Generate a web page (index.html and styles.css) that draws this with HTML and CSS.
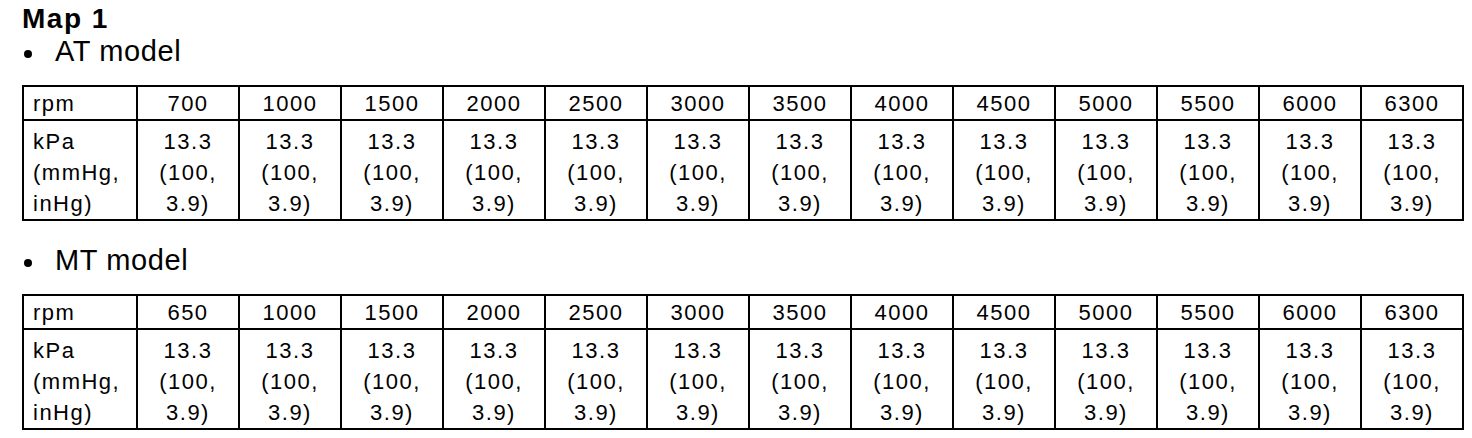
FILE: index.html
```html
<!DOCTYPE html>
<html lang="en">
<head>
    <meta charset="UTF-8">
    <title>Map 1</title>
    <link rel="stylesheet" href="styles.css">
</head>
<body>
    <div class="page">
        <h1 class="map-title">Map 1</h1>

        <p class="model">AT model</p>
        <table class="map-table">
            <colgroup>
                <col class="col-label">
                <col span="13" class="col-value">
            </colgroup>
            <tr class="row-rpm">
                <td class="label">rpm</td>
                <td>700</td><td>1000</td><td>1500</td><td>2000</td><td>2500</td><td>3000</td><td>3500</td>
                <td>4000</td><td>4500</td><td>5000</td><td>5500</td><td>6000</td><td>6300</td>
            </tr>
            <tr class="row-kpa">
                <td class="label">kPa<br>(mmHg,<br>inHg)</td>
                <td>13.3<br>(100,<br>3.9)</td><td>13.3<br>(100,<br>3.9)</td><td>13.3<br>(100,<br>3.9)</td>
                <td>13.3<br>(100,<br>3.9)</td><td>13.3<br>(100,<br>3.9)</td><td>13.3<br>(100,<br>3.9)</td>
                <td>13.3<br>(100,<br>3.9)</td><td>13.3<br>(100,<br>3.9)</td><td>13.3<br>(100,<br>3.9)</td>
                <td>13.3<br>(100,<br>3.9)</td><td>13.3<br>(100,<br>3.9)</td><td>13.3<br>(100,<br>3.9)</td>
                <td>13.3<br>(100,<br>3.9)</td>
            </tr>
        </table>

        <p class="model model-mt">MT model</p>
        <table class="map-table">
            <colgroup>
                <col class="col-label">
                <col span="13" class="col-value">
            </colgroup>
            <tr class="row-rpm">
                <td class="label">rpm</td>
                <td>650</td><td>1000</td><td>1500</td><td>2000</td><td>2500</td><td>3000</td><td>3500</td>
                <td>4000</td><td>4500</td><td>5000</td><td>5500</td><td>6000</td><td>6300</td>
            </tr>
            <tr class="row-kpa">
                <td class="label">kPa<br>(mmHg,<br>inHg)</td>
                <td>13.3<br>(100,<br>3.9)</td><td>13.3<br>(100,<br>3.9)</td><td>13.3<br>(100,<br>3.9)</td>
                <td>13.3<br>(100,<br>3.9)</td><td>13.3<br>(100,<br>3.9)</td><td>13.3<br>(100,<br>3.9)</td>
                <td>13.3<br>(100,<br>3.9)</td><td>13.3<br>(100,<br>3.9)</td><td>13.3<br>(100,<br>3.9)</td>
                <td>13.3<br>(100,<br>3.9)</td><td>13.3<br>(100,<br>3.9)</td><td>13.3<br>(100,<br>3.9)</td>
                <td>13.3<br>(100,<br>3.9)</td>
            </tr>
        </table>
    </div>
</body>
</html>
```

FILE: styles.css
```css
* {
    box-sizing: border-box;
    margin: 0;
    padding: 0;
}

body {
    background: #fff;
    color: #000;
    font-family: 'Liberation Sans', Arial, sans-serif;
}

.page {
    padding: 3px 0 0 22px;
    width: 1472px;
}

.map-title {
    font-size: 28px;
    font-weight: 700;
    line-height: 32px;
    letter-spacing: 1.5px;
}

.model {
    font-size: 29px;
    line-height: 32px;
    letter-spacing: 0.6px;
    margin-bottom: 18px;
}

/* round bullet in front of each model name */
.model::before {
    content: "";
    display: inline-block;
    width: 8px;
    height: 8px;
    border-radius: 50%;
    background: #000;
    margin: 0 23px 0 2px;
    vertical-align: 3px;
}

.model-mt {
    margin-top: 23px;
}

.map-table {
    border-collapse: collapse;
    table-layout: fixed;
    width: 1440px;
    font-size: 22px;
    letter-spacing: 1.5px;
}

.col-label {
    width: 114px;
}

.col-value {
    width: 102px;
}

.map-table td {
    border: 2px solid #000;
    text-align: center;
    vertical-align: top;
    line-height: 31px;
}

.map-table td.label {
    text-align: left;
    padding-left: 9px;
}

.row-rpm td {
    padding-top: 1px;
}

.row-kpa td {
    padding-top: 5px;
}
```
